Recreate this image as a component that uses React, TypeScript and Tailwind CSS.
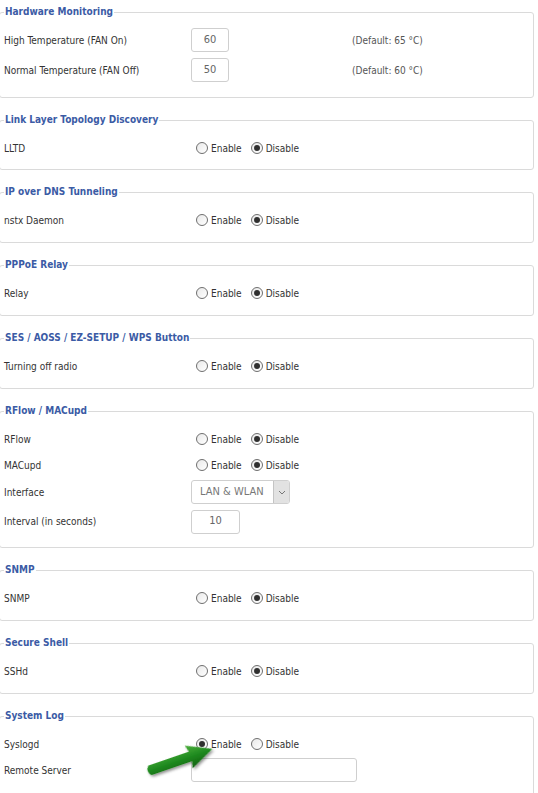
import React from 'react';

const font = { fontFamily: '"DejaVu Sans", Tahoma, sans-serif' };

const Radio = ({ checked }: { checked?: boolean }) => (
  <span className="ml-[5px] mr-[3px] flex h-[12px] w-[12px] items-center justify-center rounded-full border border-[#6f6f6f] bg-gradient-to-br from-[#e9e9e9] to-white">
    {checked && <span className="h-[6px] w-[6px] rounded-full bg-[#2f2f2f]" />}
  </span>
);

const EnableDisable = ({ enabled }: { enabled?: boolean }) => (
  <div className="flex items-center text-[10px] text-[#333]">
    <Radio checked={enabled} />
    <span>Enable</span>
    <span className="ml-[4px]" />
    <Radio checked={!enabled} />
    <span>Disable</span>
  </div>
);

const Row = ({ label, h = 'h-[26px]', children }: { label: string; h?: string; children: React.ReactNode }) => (
  <div className={`flex items-center ${h}`}>
    <div className="w-[187px] shrink-0 text-[10px] text-[#333]">{label}</div>
    {children}
  </div>
);

const Box = ({ w, value }: { w: string; value?: string }) => (
  <div className={`flex h-[24px] ${w} items-center justify-center rounded-[3px] border border-[#cfcfcf] bg-white text-[11px] text-[#666]`}>
    {value}
  </div>
);

const Section = ({ title, pb = 'pb-[9px]', children }: { title: string; pb?: string; children: React.ReactNode }) => (
  <fieldset className={`mb-[15px] ml-[-1px] w-[535px] rounded-[3px] border border-[#dadada] pl-[4px] pr-0 pt-0 ${pb}`}>
    <legend className="px-[1px] text-[10px] font-bold leading-[14px] text-[#3b5ba5]">{title}</legend>
    <div className="mt-[8px]">{children}</div>
  </fieldset>
);

export default function App() {
  return (
    <div className="font-stretch-condensed relative h-[793px] w-[538px] overflow-hidden bg-white pt-[5px]" style={font}>
      <Section title="Hardware Monitoring" pb="pb-[12px]">
        <div className="-mt-[2px]">
          <Row label="High Temperature (FAN On)" h="h-[30px]">
            <Box w="w-[38px]" value="60" />
            <span className="ml-[123px] text-[10px] text-[#555]">(Default: 65 °C)</span>
          </Row>
          <Row label="Normal Temperature (FAN Off)" h="h-[30px]">
            <Box w="w-[38px]" value="50" />
            <span className="ml-[123px] text-[10px] text-[#555]">(Default: 60 °C)</span>
          </Row>
        </div>
      </Section>

      <Section title="Link Layer Topology Discovery" pb="pb-[8px]">
        <Row label="LLTD">
          <EnableDisable />
        </Row>
      </Section>

      <Section title="IP over DNS Tunneling">
        <Row label="nstx Daemon">
          <EnableDisable />
        </Row>
      </Section>

      <Section title="PPPoE Relay">
        <Row label="Relay">
          <EnableDisable />
        </Row>
      </Section>

      <Section title="SES / AOSS / EZ-SETUP / WPS Button">
        <Row label="Turning off radio">
          <EnableDisable />
        </Row>
      </Section>

      <Section title="RFlow / MACupd" pb="pb-[10px]">
        <Row label="RFlow">
          <EnableDisable />
        </Row>
        <Row label="MACupd">
          <EnableDisable />
        </Row>
        <Row label="Interface" h="h-[28px]">
          <div className="flex h-[24px] w-[99px] items-stretch rounded-[3px] border border-[#cfcfcf] bg-white">
            <div className="flex flex-1 items-center pl-[8px] text-[11px] text-[#777]">LAN &amp; WLAN</div>
            <div className="flex w-[16px] items-center justify-center rounded-r-[2px] border-l border-[#c4c4c4] bg-[#e2e2e2]">
              <svg width="8" height="5" viewBox="0 0 8 5">
                <path d="M1 1 L4 4 L7 1" fill="none" stroke="#777" strokeWidth="1" />
              </svg>
            </div>
          </div>
        </Row>
        <Row label="Interval (in seconds)" h="h-[31px]">
          <Box w="w-[49px]" value="10" />
        </Row>
      </Section>

      <Section title="SNMP">
        <Row label="SNMP">
          <EnableDisable />
        </Row>
      </Section>

      <Section title="Secure Shell">
        <Row label="SSHd">
          <EnableDisable />
        </Row>
      </Section>

      <Section title="System Log">
        <Row label="Syslogd">
          <EnableDisable enabled />
        </Row>
        <Row label="Remote Server">
          <Box w="w-[166px]" />
        </Row>
        <Row label="">
          <span />
        </Row>
      </Section>

      <svg className="pointer-events-none absolute left-[136px] top-[729px]" width="90" height="60" viewBox="0 0 90 60">
        <defs>
          <linearGradient id="ag" x1="0" y1="0" x2="0" y2="1">
            <stop offset="0" stopColor="#4caf3c" />
            <stop offset="0.5" stopColor="#1f8a1f" />
            <stop offset="1" stopColor="#10600f" />
          </linearGradient>
          <filter id="sh" x="-30%" y="-30%" width="160%" height="160%">
            <feDropShadow dx="1" dy="2" stdDeviation="1.6" floodColor="#000" floodOpacity="0.45" />
          </filter>
        </defs>
        <g transform="translate(12 42) rotate(-19)" filter="url(#sh)">
          <path d="M2 -5 L45 -5 L43 -12 L68 0 L43 12 L45 5 L2 5 Q-2.5 0 2 -5 Z" fill="url(#ag)" />
        </g>
      </svg>
    </div>
  );
}
